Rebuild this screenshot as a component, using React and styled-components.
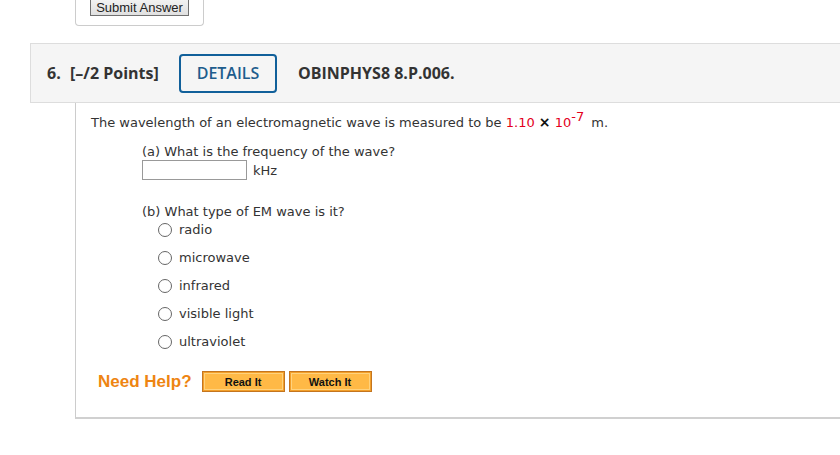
import styled, { createGlobalStyle } from "styled-components";

const GlobalStyle = createGlobalStyle`
  body {
    margin: 0;
    background: #fff;
    overflow: hidden;
  }
`;

const Page = styled.div`
  width: 840px;
  height: 455px;
  overflow: hidden;
`;

const SubmitArea = styled.div`
  margin-left: 75px;
  width: 129px;
  height: 26px;
  border: 1px solid #ccc;
  border-top: none;
  border-radius: 0 0 4px 4px;
  padding-left: 14px;
  box-sizing: border-box;
`;

const SubmitButton = styled.button`
  display: block;
  width: 99px;
  height: 16px;
  margin: 0;
  padding: 0;
  font-family: "Liberation Sans", Arial, sans-serif;
  font-size: 13px;
  line-height: 14px;
  color: #222;
  background: linear-gradient(#f2f2f2, #e0e0e0);
  border: 1px solid #707070;
  border-top: none;
  border-radius: 0;
`;

const QuestionHeader = styled.div`
  margin: 17px 0 0 30px;
  width: 900px;
  height: 58px;
  display: flex;
  align-items: center;
  background: #f5f5f5;
  border: 1px solid #ddd;
  border-right: none;
  font-family: "Open Sans", sans-serif;
  font-weight: 700;
  font-size: 16px;
  color: #333;
`;

const Number = styled.span`
  margin-left: 16px;
  width: 23px;
`;

const Points = styled.span`
  width: 109px;
`;

const DetailsButton = styled.div`
  width: 98px;
  height: 39px;
  box-sizing: border-box;
  border: 2px solid #11609a;
  border-radius: 4px;
  display: flex;
  align-items: center;
  justify-content: center;
  color: #1e5d8d;
  font-weight: 600;
  font-size: 16px;
`;

const Code = styled.span`
  margin-left: 21px;
`;

const QuestionBody = styled.div`
  margin-left: 75px;
  width: 900px;
  height: 316px;
  box-sizing: border-box;
  border-left: 1px solid #ccc;
  border-bottom: 2px solid #d0d0d0;
  padding: 11px 0 0 15px;
  font-family: "DejaVu Sans", Verdana, sans-serif;
  font-size: 13px;
  color: #333;
`;

const Prompt = styled.div`
  line-height: 18px;
  height: 20px;
`;

const Red = styled.span`
  color: #e3001b;
`;

const Times = styled.span`
  color: #111;
  font-weight: 700;
  font-size: 14px;
  line-height: 0;
`;

const Sup = styled.sup`
  font-size: 13px;
  vertical-align: 6px;
  line-height: 0;
  margin-right: 3px;
`;

const Part = styled.div`
  margin: ${({ $top }) => $top}px 0 0 51px;
`;

const PartLabel = styled.div`
  line-height: 17px;
`;

const AnswerRow = styled.div`
  display: flex;
  align-items: center;
  gap: 6px;
`;

const AnswerInput = styled.input`
  width: 105px;
  height: 20px;
  box-sizing: border-box;
  border: 1px solid #999;
  margin: 0;
`;

const Options = styled.div`
  margin-left: 16px;
  display: flex;
  flex-direction: column;
  gap: 11px;
  margin-top: 1px;
`;

const Option = styled.label`
  display: flex;
  align-items: center;
  gap: 7px;
  height: 17px;
`;

const Radio = styled.span`
  width: 14px;
  height: 14px;
  box-sizing: border-box;
  border: 1px solid #666;
  border-radius: 50%;
  background: #fff;
`;

const HelpRow = styled.div`
  display: flex;
  align-items: center;
  margin: 21px 0 0 7px;
`;

const HelpText = styled.span`
  font-family: "Liberation Sans", Arial, sans-serif;
  font-weight: 700;
  font-size: 17px;
  color: #ee8512;
  margin-right: 10px;
`;

const HelpButton = styled.div`
  width: 83px;
  height: 21px;
  box-sizing: border-box;
  border: 1px solid #c4751f;
  background: #ffb946;
  box-shadow: inset 0 0 0 1px #f29f2a, inset 0 0 0 2px #ffd27d;
  margin-right: 4px;
  display: flex;
  align-items: center;
  justify-content: center;
  font-family: "Liberation Sans", Arial, sans-serif;
  font-weight: 700;
  font-size: 11px;
  color: #111;
`;

const waveTypes = ["radio", "microwave", "infrared", "visible light", "ultraviolet"];

export default function App() {
  return (
    <Page>
      <GlobalStyle />
      <SubmitArea>
        <SubmitButton>Submit Answer</SubmitButton>
      </SubmitArea>
      <QuestionHeader>
        <Number>6.</Number>
        <Points>[–/2 Points]</Points>
        <DetailsButton>DETAILS</DetailsButton>
        <Code>OBINPHYS8 8.P.006.</Code>
      </QuestionHeader>
      <QuestionBody>
        <Prompt>
          The wavelength of an electromagnetic wave is measured to be{" "}
          <Red>1.10</Red> <Times>×</Times> <Red>10<Sup>-7</Sup></Red> m.
        </Prompt>
        <Part $top={9}>
          <PartLabel>(a) What is the frequency of the wave?</PartLabel>
          <AnswerRow>
            <AnswerInput />
            <span>kHz</span>
          </AnswerRow>
        </Part>
        <Part $top={23}>
          <PartLabel>(b) What type of EM wave is it?</PartLabel>
          <Options>
            {waveTypes.map((type) => (
              <Option key={type}>
                <Radio />
                {type}
              </Option>
            ))}
          </Options>
        </Part>
        <HelpRow>
          <HelpText>Need Help?</HelpText>
          <HelpButton>Read It</HelpButton>
          <HelpButton>Watch It</HelpButton>
        </HelpRow>
      </QuestionBody>
    </Page>
  );
}
